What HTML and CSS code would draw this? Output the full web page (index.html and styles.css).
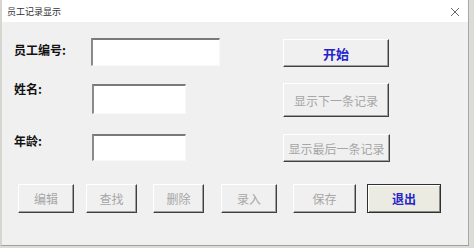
FILE: index.html
```html
<!DOCTYPE html>
<html lang="zh">
<head>
<meta charset="utf-8">
<title>员工记录显示</title>
<link rel="stylesheet" href="styles.css">
</head>
<body>
<div class="window">
  <div class="titlebar">
    <span class="title">员工记录显示</span>
    <svg class="close" width="10" height="10" viewBox="0 0 10 10"><path d="M1 1 L9 9 M9 1 L1 9" stroke="#555" stroke-width="0.9" fill="none"/></svg>
  </div>
  <div class="client">
    <div class="form">
      <div class="label l1">员工编号:</div>
      <div class="field"><div class="input in1"></div></div>
      <div class="field"><div class="btn active b-start">开始</div></div>

      <div class="label l2">姓名:</div>
      <div class="field"><div class="input in2"></div></div>
      <div class="field"><div class="btn disabled b-next">显示下一条记录</div></div>

      <div class="label l3">年龄:</div>
      <div class="field"><div class="input in3"></div></div>
      <div class="field"><div class="btn disabled b-last">显示最后一条记录</div></div>
    </div>
    <div class="actions">
      <div class="btn disabled a-edit">编辑</div>
      <div class="btn disabled a-find">查找</div>
      <div class="btn disabled a-del">删除</div>
      <div class="btn disabled a-add">录入</div>
      <div class="btn disabled a-save">保存</div>
      <div class="btn default a-exit">退出</div>
    </div>
  </div>
</div>
</body>
</html>
```
FILE: styles.css
```css
html, body {
  margin: 0;
  padding: 0;
  background: #dcdcd6;
  font-family: "Noto Sans CJK SC", "DejaVu Sans", sans-serif;
}
.window {
  width: 466px;
  height: 245px;
  border-left: 2px solid #d6d6d0;
  border-right: 1px solid #a8a8a8;
  border-bottom: 1px solid #a0a0a0;
  background: #f0f0f0;
  display: flex;
  flex-direction: column;
}
.titlebar {
  height: 22px;
  background: #ffffff;
  display: flex;
  align-items: center;
  justify-content: space-between;
  padding: 0 8px 0 5px;
  flex: none;
}
.title {
  font-size: 9px;
  line-height: 10px;
  color: #333;
  margin-top: 1px;
}
.close {
  margin-top: 1px;
}
.client {
  flex: 1;
  padding: 16px 0 0 12px;
  background: #f0f0f0;
}
.form {
  display: grid;
  grid-template-columns: 77px 192px 108px;
  grid-template-rows: 45px 51px 28px;
}
.label {
  font-size: 12px;
  line-height: 12px;
  font-weight: bold;
  color: #111;
}
.l1 { margin-top: 6px; }
.l2 { margin-top: 0; }
.l3 { margin-top: 1px; }
.input {
  background: #fff;
  box-sizing: border-box;
  border-top: 2px solid #7a7a7a;
  border-left: 2px solid #8a8a8a;
  border-right: 1px solid #f8f8f8;
  border-bottom: 1px solid #f8f8f8;
}
.in1 { width: 129px; height: 28px; }
.in2 { width: 94px; height: 30px; margin: 1px 0 0 1px; }
.in3 { width: 94px; height: 27px; margin-left: 1px; }
.btn {
  box-sizing: border-box;
  display: flex;
  align-items: center;
  justify-content: center;
  font-size: 12px;
  background: #f0f0f0;
  border: 1px solid;
  border-color: #ffffff #404040 #404040 #ffffff;
  box-shadow: inset -1px -1px 0 #a0a0a0;
}
.disabled { color: #a6a6a6; }
.active {
  color: #2424c8;
  font-weight: bold;
}
.b-start { width: 106px; height: 28px; margin-top: 1px; font-size: 13px; }
.b-next { width: 106px; height: 34px; }
.b-last { width: 107px; height: 28px; }
.actions {
  display: flex;
  margin-top: 22px;
  margin-left: 4px;
}
.actions .btn { height: 29px; }
.a-edit { width: 56px; }
.a-find { width: 51px; margin-left: 12px; }
.a-del { width: 51px; margin-left: 16px; }
.a-add { width: 56px; margin-left: 17px; }
.a-save { width: 63px; margin-left: 16px; }
.a-exit {
  width: 74px;
  margin-left: 11px;
  color: #2424c8;
  font-weight: bold;
  background: #ecebe2;
  border: 1px solid #303030;
  box-shadow: inset 1px 1px 0 #ffffff, inset -1px -1px 0 #8a8a8a;
}
```
